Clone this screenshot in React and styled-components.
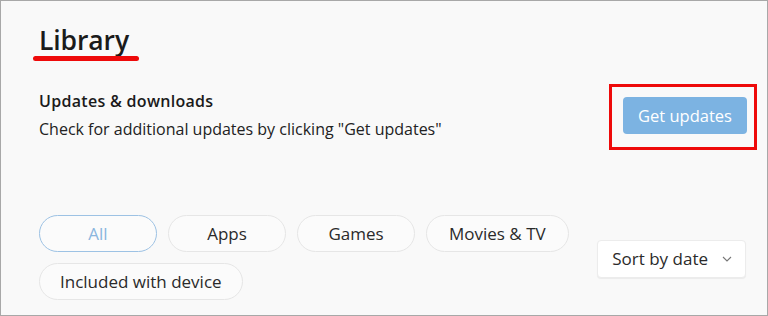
import React from 'react'
import styled, {createGlobalStyle} from 'styled-components'

const GlobalStyle = createGlobalStyle`
  html, body {
    margin: 0;
    padding: 0;
    background: #f9f9f9;
  }
  * {
    box-sizing: border-box;
  }
`

const Frame = styled.div`
  width: 768px;
  height: 316px;
  border: 1px solid #a8a8a8;
  background-color: #f9f9f9;
  font-family: 'Open Sans', 'Noto Sans', sans-serif;
  color: #1b1b1b;
  padding: 22px 10px 0 38px;
  display: flex;
  flex-direction: column;
`

const Title = styled.h1`
  position: relative;
  align-self: flex-start;
  margin: 0;
  font-size: 26.5px;
  font-weight: 600;
  line-height: 35px;
  letter-spacing: -0.1px;

  &::after {
    content: '';
    position: absolute;
    left: -6px;
    right: -10px;
    bottom: -3px;
    height: 5px;
    border-radius: 3px;
    background-color: #ee0a0a;
  }
`

const UpdatesRow = styled.div`
  display: flex;
  justify-content: space-between;
  align-items: flex-start;
  margin-top: 26px;
`

const UpdatesText = styled.div`
  display: flex;
  flex-direction: column;
  padding-top: 6px;
`

const SectionTitle = styled.div`
  font-size: 16px;
  font-weight: 600;
  line-height: 22px;
  letter-spacing: 0.3px;
`

const SectionBody = styled.div`
  font-size: 16px;
  line-height: 22px;
  margin-top: 6px;
  color: #222;
`

const Highlight = styled.div`
  border: 3px solid #ee0a0a;
  padding: 10px 7px 13px 11px;
`

const PrimaryButton = styled.button`
  width: 124px;
  height: 37px;
  border: none;
  border-radius: 4px;
  background-color: #7cb3e2;
  color: #fff;
  font-family: inherit;
  font-size: 16.5px;
  padding: 0;
`

const FilterRow = styled.div`
  display: flex;
  align-items: center;
  justify-content: space-between;
  margin-top: 65px;
  padding-right: 11px;
`

const Pills = styled.div`
  display: flex;
  flex-wrap: wrap;
  gap: 11px;
  width: 545px;
`

const Pill = styled.button`
  min-width: 118px;
  height: 37px;
  padding: 0 ${p => (p.$wide ? 22 : 20)}px;
  border-radius: 19px;
  border: 1px solid ${p => (p.$active ? '#9dc2e4' : '#e6e6e6')};
  background-color: #fbfbfb;
  color: ${p => (p.$active ? '#8ab6de' : '#2a2a2a')};
  font-family: inherit;
  font-size: 17px;
`

const SortSelect = styled.button`
  display: flex;
  align-items: center;
  gap: 14px;
  height: 38px;
  margin-top: 2px;
  padding: 0 13px 0 14px;
  border: 1px solid #ececec;
  border-radius: 4px;
  background-color: #fff;
  box-shadow: 0 1px 1px rgba(0, 0, 0, 0.06);
  color: #2a2a2a;
  font-family: inherit;
  font-size: 17px;
`

const Chevron = () =>
  <svg width="10" height="6" viewBox="0 0 10 6">
    <path d="M1 1l4 4 4-4" fill="none" stroke="#777" strokeWidth="1.1" />
  </svg>

const filters = ['All', 'Apps', 'Games', 'Movies & TV', 'Included with device']

export default () =>
  <Frame>
    <GlobalStyle />
    <Title>Library</Title>
    <UpdatesRow>
      <UpdatesText>
        <SectionTitle>Updates &amp; downloads</SectionTitle>
        <SectionBody>Check for additional updates by clicking "Get updates"</SectionBody>
      </UpdatesText>
      <Highlight>
        <PrimaryButton>Get updates</PrimaryButton>
      </Highlight>
    </UpdatesRow>
    <FilterRow>
      <Pills>
        {filters.map((f, i) =>
          <Pill key={f} $active={i === 0} $wide={i === 3}>{f}</Pill>)}
      </Pills>
      <SortSelect>
        Sort by date
        <Chevron />
      </SortSelect>
    </FilterRow>
  </Frame>
